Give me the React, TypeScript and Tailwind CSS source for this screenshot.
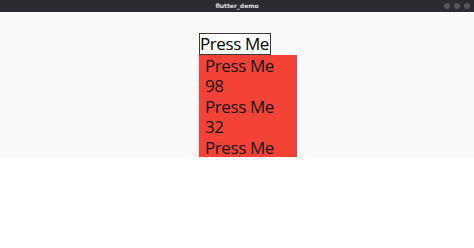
import React from "react";

export default function App() {
  const lines = ["Press Me", "98", "Press Me", "32", "Press Me"];
  return (
    <div className="w-[474px] h-[248px] bg-white" style={{ fontFamily: '"Open Sans", "Noto Sans", sans-serif' }}>
      <div className="relative h-[12px] bg-[#2c2b31] flex items-center justify-center">
        <span className="text-[6px] font-bold text-[#e0e0e0] leading-none" style={{ fontFamily: '"DejaVu Sans", sans-serif' }}>flutter_demo</span>
        <div className="absolute right-[4px] top-[3px] flex gap-[4px]">
          <div className="w-[6px] h-[6px] rounded-full bg-[#56555b]" />
          <div className="w-[6px] h-[6px] rounded-full bg-[#56555b]" />
          <div className="w-[6px] h-[6px] rounded-full bg-[#56555b]" />
        </div>
      </div>
      <div className="h-[145px] bg-[#fafafa] overflow-hidden pt-[21px] pl-[199px]">
        <div className="flex flex-col items-start">
          <div className="h-[22px] w-[72px] border border-[#3a3a3a] bg-white text-[17px] leading-[20px] tracking-[-0.4px] text-black whitespace-nowrap">
            Press Me
          </div>
          <div className="w-[98px] h-[103px] bg-[#f44336] pt-[1px] pl-[6px] text-[17px] leading-[20.4px] tracking-[-0.4px] text-[#151515]">
            {lines.map((l, i) => (
              <div key={i} className="whitespace-nowrap">{l}</div>
            ))}
          </div>
        </div>
      </div>
    </div>
  );
}
